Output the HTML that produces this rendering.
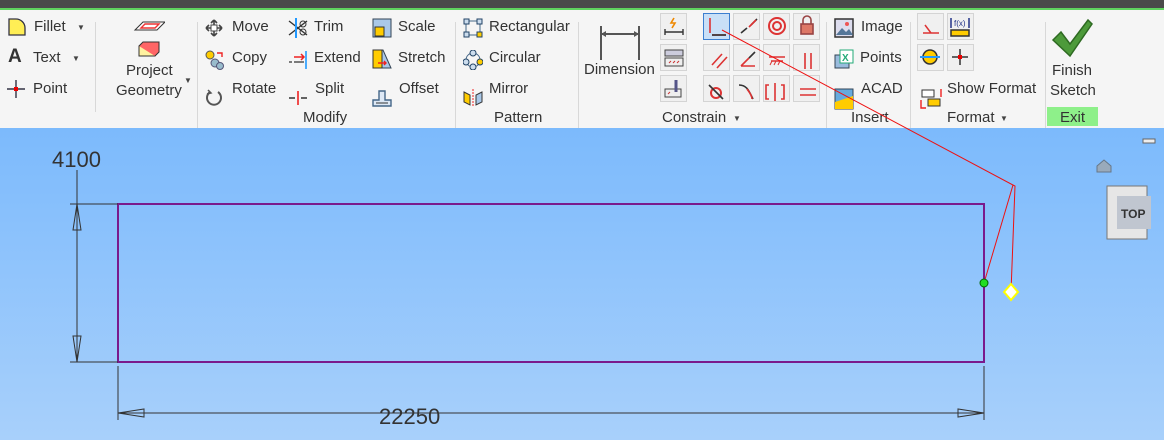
<!DOCTYPE html>
<html><head><meta charset="utf-8"><style>
*{margin:0;padding:0;box-sizing:border-box}
body{width:1164px;height:440px;overflow:hidden;position:relative;font-family:"Liberation Sans",sans-serif;background:#f5f5f5}
.top{position:absolute;left:0;top:0;width:1164px;height:8px;background:#4a4a4a}
.gl{position:absolute;left:0;top:8px;width:1164px;height:2px;background:#5fd35f}
.rib{position:absolute;left:0;top:10px;width:1164px;height:118px;background:#f5f5f5}
.t{position:absolute;font-size:15px;color:#333;white-space:nowrap;line-height:18px}
.sep{position:absolute;top:12px;width:1px;height:115px;background:#d8d8d8}
.ic{position:absolute}
.b{position:absolute;width:27px;height:27px;background:#f0f0f0;border:1px solid #d4d4d4}
.canvas{position:absolute;left:0;top:128px;width:1164px;height:312px;background:linear-gradient(#7cbafc,#a8d0fb)}
.ar{font-size:8px;position:absolute;color:#444}
</style></head><body>
<div class="top"></div><div class="gl"></div>
<div class="rib">
<!-- left group -->
<svg class="ic" style="left:8px;top:8px" width="18" height="18"><path d="M1 17V1h7a9 9 0 0 1 9 9v7z" fill="#ffee55" stroke="#334" stroke-width="1.3"/></svg>
<div class="t" style="left:34px;top:8px">Fillet</div><div class="ar" style="left:77px;top:13px">▼</div>
<div class="t" style="left:8px;top:38px;font-weight:bold;font-size:19px;color:#333">A</div>
<div class="t" style="left:33px;top:39px">Text</div><div class="ar" style="left:72px;top:44px">▼</div>
<svg class="ic" style="left:7px;top:70px" width="18" height="18"><path d="M0 9h7M11 9h7M9 0v7M9 11v7" stroke="#334" stroke-width="1.4"/><rect x="7" y="7" width="4" height="4" fill="#e00"/></svg>
<div class="t" style="left:33px;top:70px">Point</div>
<div class="sep" style="left:95px;top:12px;height:90px"></div>
<svg class="ic" style="left:133px;top:10px" width="32" height="38"><path d="M2 10l8-8h22l-8 8z" fill="#fff" stroke="#333"/><path d="M8 8l4-4h14l-4 4z" fill="none" stroke="#e33" stroke-width="1.4"/><rect x="6" y="26" width="16" height="10" fill="#fff2a0" stroke="#333"/><path d="M6 26l4-4h16v10l-4 4" fill="#f66" stroke="#333"/><path d="M10 22h16v10" fill="none" stroke="#333"/></svg>
<div class="t" style="left:126px;top:52px">Project</div>
<div class="t" style="left:116px;top:72px">Geometry</div><div class="ar" style="left:184px;top:66px">▼</div>
<div class="sep" style="left:197px"></div>
<!-- modify -->
<svg class="ic" style="left:205px;top:9px" width="18" height="18"><path d="M9 1v16M1 9h16M9 1l-3 3M9 1l3 3M9 17l-3-3M9 17l3-3M1 9l3-3M1 9l3 3M17 9l-3-3M17 9l-3 3" stroke="#444" stroke-width="1.6" fill="none"/><rect x="6" y="6" width="6" height="6" fill="#fff" stroke="#444"/></svg>
<div class="t" style="left:232px;top:8px">Move</div>
<svg class="ic" style="left:205px;top:40px" width="20" height="20"><circle cx="5" cy="5" r="4" fill="#fc0" stroke="#555"/><circle cx="10" cy="13" r="4" fill="#9bc" stroke="#557"/><circle cx="15" cy="16" r="3.5" fill="#9bc" stroke="#557"/><path d="M12 3h5v4" stroke="#e22" fill="none" stroke-width="1.4"/></svg>
<div class="t" style="left:232px;top:39px">Copy</div>
<svg class="ic" style="left:205px;top:79px" width="18" height="18"><path d="M13 3A7 7 0 1 1 5 3" stroke="#555" stroke-width="2" fill="none"/><path d="M3 1l3 3-4 1" stroke="#555" fill="none" stroke-width="1.5"/></svg>
<div class="t" style="left:232px;top:70px">Rotate</div>
<svg class="ic" style="left:288px;top:8px" width="20" height="20"><path d="M1 3l18 14M1 17L19 3" stroke="#333" stroke-width="1.4"/><circle cx="15" cy="14" r="3" fill="none" stroke="#333"/><circle cx="15" cy="6" r="3" fill="none" stroke="#333"/><path d="M8 0v20" stroke="#29f" stroke-width="2"/></svg>
<div class="t" style="left:314px;top:8px">Trim</div>
<svg class="ic" style="left:288px;top:41px" width="20" height="18"><path d="M1 11h3M6 11h10" stroke="#333" stroke-width="1.3"/><path d="M6 6h9M13 3l3 3-3 3" stroke="#e22" stroke-width="1.5" fill="none"/><path d="M18 0v18" stroke="#29f" stroke-width="1.6"/></svg>
<div class="t" style="left:314px;top:39px">Extend</div>
<svg class="ic" style="left:288px;top:80px" width="20" height="16"><path d="M1 8h6M13 8h6M5 4h0" stroke="#333" stroke-width="1.4"/><path d="M10 1v14" stroke="#e22" stroke-width="1.6"/></svg>
<div class="t" style="left:315px;top:70px">Split</div>
<svg class="ic" style="left:372px;top:8px" width="20" height="20"><rect x="1" y="1" width="18" height="18" fill="#aac8e8" stroke="#345"/><rect x="3" y="9" width="9" height="9" fill="#fc0" stroke="#333"/></svg>
<div class="t" style="left:398px;top:8px">Scale</div>
<svg class="ic" style="left:372px;top:39px" width="20" height="20"><path d="M1 1h10l8 18H1z" fill="#aac8e8" stroke="#345"/><rect x="1" y="1" width="9" height="18" fill="#fc0" stroke="#333"/><path d="M6 14h8M12 12l2 2-2 2" stroke="#e22" fill="none" stroke-width="1.4"/></svg>
<div class="t" style="left:398px;top:39px">Stretch</div>
<svg class="ic" style="left:372px;top:79px" width="20" height="18"><path d="M1 17V11h6V2h6v9h6v6z" fill="#dde8f5" stroke="#468" stroke-width="1.4"/><path d="M4 14h12" stroke="#333"/></svg>
<div class="t" style="left:399px;top:70px">Offset</div>
<div class="t" style="left:303px;top:99px">Modify</div>
<div class="sep" style="left:455px"></div>
<!-- pattern -->
<svg class="ic" style="left:463px;top:8px" width="20" height="20"><rect x="3" y="3" width="14" height="14" fill="none" stroke="#468"/><rect x="1" y="1" width="5" height="5" fill="#cde" stroke="#246"/><rect x="14" y="1" width="5" height="5" fill="#cde" stroke="#246"/><rect x="1" y="14" width="5" height="5" fill="#cde" stroke="#246"/><rect x="14" y="14" width="5" height="5" fill="#fc0" stroke="#246"/></svg>
<div class="t" style="left:489px;top:8px">Rectangular</div>
<svg class="ic" style="left:463px;top:40px" width="20" height="20"><circle cx="10" cy="10" r="7" fill="none" stroke="#468"/><circle cx="10" cy="3" r="3" fill="#cde" stroke="#246"/><circle cx="3" cy="12" r="3" fill="#cde" stroke="#246"/><circle cx="17" cy="12" r="3" fill="#fc0" stroke="#246"/><circle cx="10" cy="17" r="3" fill="#cde" stroke="#246"/></svg>
<div class="t" style="left:489px;top:39px">Circular</div>
<svg class="ic" style="left:463px;top:79px" width="20" height="18"><path d="M1 3l6 3v10l-6-3z" fill="#fc0" stroke="#333"/><path d="M19 3l-6 3v10l6-3z" fill="#aac8e8" stroke="#333"/><path d="M10 0v18" stroke="#e22" stroke-dasharray="2 1"/></svg>
<div class="t" style="left:489px;top:70px">Mirror</div>
<div class="t" style="left:494px;top:99px">Pattern</div>
<div class="sep" style="left:578px"></div>
<!-- constrain -->
<svg class="ic" style="left:599px;top:16px" width="42" height="34"><path d="M2 0v34M40 0v34M2 8h38" stroke="#555" stroke-width="2"/><path d="M2 8l5-3v6zM40 8l-5-3v6z" fill="#555"/></svg>
<div class="t" style="left:584px;top:51px">Dimension</div>
<div class="b" style="left:660px;top:3px"></div><div class="b" style="left:660px;top:34px"></div><div class="b" style="left:660px;top:65px"></div>
<svg class="ic" style="left:664px;top:7px" width="20" height="20"><path d="M10 1l-3 5h4l-3 5" stroke="#e80" fill="none" stroke-width="1.6"/><path d="M1 15h18M1 12v6M19 12v6" stroke="#333" stroke-width="1.4"/></svg>
<svg class="ic" style="left:664px;top:38px" width="20" height="20"><rect x="1" y="2" width="18" height="6" fill="#ccd" stroke="#444"/><rect x="1" y="10" width="18" height="8" fill="#eee" stroke="#444"/><path d="M5 15l2-2M9 15l2-2 M13 15l2-2" stroke="#c33"/></svg>
<svg class="ic" style="left:664px;top:69px" width="20" height="20"><rect x="1" y="10" width="16" height="8" fill="#eee" stroke="#444"/><path d="M12 1v12" stroke="#558" stroke-width="3"/><path d="M4 15l2-2" stroke="#c33"/></svg>
<div class="b" style="left:703px;top:3px;background:#c9e0f7;border-color:#3c7fd0"></div>
<div class="b" style="left:733px;top:3px"></div><div class="b" style="left:763px;top:3px"></div><div class="b" style="left:793px;top:3px"></div>
<div class="b" style="left:703px;top:34px"></div><div class="b" style="left:733px;top:34px"></div><div class="b" style="left:763px;top:34px"></div><div class="b" style="left:793px;top:34px"></div>
<div class="b" style="left:703px;top:65px"></div><div class="b" style="left:733px;top:65px"></div><div class="b" style="left:763px;top:65px"></div><div class="b" style="left:793px;top:65px"></div>
<svg class="ic" style="left:703px;top:3px" width="120" height="93" fill="none" stroke-width="1.6">
<path d="M7 5v15M9 22h14" stroke="#d33"/><path d="M9 22h14" stroke="#333"/>
<path d="M38 20l6-5M48 12l6-6" stroke="#333"/><path d="M46 14l7-7" stroke="#d33"/>
<circle cx="74" cy="13" r="8" stroke="#d33" stroke-width="2"/><circle cx="74" cy="13" r="4" stroke="#d33" stroke-width="2"/>
<rect x="98" y="11" width="12" height="10" fill="#d76" stroke="#944"/><path d="M100 11V7a4 4 0 0 1 8 0v4" stroke="#944"/>
<path d="M9 52l10-11M14 55l10-11" stroke="#d33"/>
<path d="M38 53l8-8M38 53h14" stroke="#d33"/><path d="M46 45l6-6" stroke="#333"/>
<path d="M66 44h16M68 48h12" stroke="#d33"/><path d="M69 48l-2 4M73 48l-2 4M77 48l-2 4" stroke="#d33" stroke-width="1"/>
<path d="M102 40v16M108 40v16" stroke="#d33"/>
<circle cx="13" cy="80" r="5" stroke="#d33" stroke-width="2"/><path d="M6 72l14 14" stroke="#333"/>
<path d="M36 72c8 0 10 6 14 14" stroke="#333"/><path d="M44 76c2 3 5 6 5 10" stroke="#d33"/>
<path d="M66 72h-3v14h3M78 72h3v14h-3M72 70v18" stroke="#d33"/>
<path d="M97 76h16M97 82h16" stroke="#d33"/>
</svg>
<div class="t" style="left:662px;top:99px">Constrain</div><div class="ar" style="left:733px;top:104px">▼</div>
<div class="sep" style="left:826px"></div>
<!-- insert -->
<svg class="ic" style="left:834px;top:8px" width="20" height="20"><rect x="1" y="1" width="18" height="18" fill="#dde" stroke="#333" stroke-width="1.5"/><path d="M2 17l6-7 4 4 3-3 4 6z" fill="#579"/><circle cx="13" cy="6" r="2" fill="#e55"/></svg>
<div class="t" style="left:861px;top:8px">Image</div>
<svg class="ic" style="left:834px;top:39px" width="20" height="20"><rect x="1" y="6" width="14" height="13" fill="#9bd" stroke="#345"/><rect x="6" y="1" width="13" height="13" fill="#fff" stroke="#2a7"/><text x="8" y="12" font-size="10" fill="#2a7" font-family="Liberation Sans" font-weight="bold">X</text></svg>
<div class="t" style="left:860px;top:39px">Points</div>
<svg class="ic" style="left:834px;top:78px" width="20" height="22"><rect x="1" y="1" width="18" height="20" fill="#6ad" stroke="#345"/><path d="M1 14l18-6v13H1z" fill="#fc0"/></svg>
<div class="t" style="left:861px;top:70px">ACAD</div>
<div class="t" style="left:851px;top:99px">Insert</div>
<div class="sep" style="left:910px"></div>
<!-- format -->
<div class="b" style="left:917px;top:3px"></div><div class="b" style="left:947px;top:3px"></div>
<div class="b" style="left:917px;top:34px"></div><div class="b" style="left:947px;top:34px"></div>
<svg class="ic" style="left:917px;top:3px" width="60" height="60" fill="none" stroke-width="1.5">
<path d="M6 20h16M8 12l6 8" stroke="#d33"/>
<path d="M34 5v10M52 5v10" stroke="#238"/><text x="37" y="13" font-size="8" fill="#238" font-family="Liberation Sans">f(x)</text><rect x="34" y="17" width="18" height="6" fill="#fc0" stroke="#333"/>
<circle cx="13" cy="44" r="7" fill="#fc0" stroke="#333"/><path d="M3 44h20" stroke="#29f" stroke-width="2"/>
<path d="M35 44h16M43 36v16" stroke="#333"/><rect x="41" y="42" width="4" height="4" fill="#e00" stroke="none"/>
</svg>
<svg class="ic" style="left:920px;top:78px" width="22" height="22"><rect x="2" y="2" width="12" height="7" fill="#fff" stroke="#333"/><rect x="8" y="11" width="12" height="7" fill="#fc0" stroke="#333"/><path d="M1 12v8h5M21 1v8" stroke="#e22" stroke-width="1.4" fill="none"/></svg>
<div class="t" style="left:947px;top:70px">Show Format</div>
<div class="t" style="left:947px;top:99px">Format</div><div class="ar" style="left:1000px;top:104px">▼</div>
<div class="sep" style="left:1045px"></div>
<!-- exit -->
<svg class="ic" style="left:1050px;top:6px" width="44" height="44"><path d="M3 24l8-8 9 12L38 4l4 4-22 32z" fill="#4d9a3a" stroke="#2e6a22" stroke-width="1.5"/></svg>
<div class="t" style="left:1052px;top:52px">Finish</div>
<div class="t" style="left:1050px;top:72px">Sketch</div>
<div style="position:absolute;left:1047px;top:97px;width:51px;height:19px;background:#8ef08a"></div>
<div class="t" style="left:1060px;top:99px">Exit</div>
</div>
<div class="canvas"></div>
<svg style="position:absolute;left:0;top:0" width="1164" height="440">
<rect x="118" y="204" width="866" height="158" fill="none" stroke="#7a1a8c" stroke-width="2"/>
<path d="M70 204h48M70 362h48M77 170v192" stroke="#333" stroke-width="1"/>
<path d="M77 204l-4 26h8zM77 362l-4-26h8z" fill="none" stroke="#333"/>
<path d="M118 366v54M984 366v54M118 413h866" stroke="#333" stroke-width="1"/>
<path d="M118 413l26-4v8zM984 413l-26-4v8z" fill="none" stroke="#333"/>
<text x="52" y="167" font-size="22" fill="#333" font-family="Liberation Sans">4100</text>
<text x="379" y="424" font-size="22" fill="#333" font-family="Liberation Sans">22250</text>
<path d="M722 30L1013 185L984 283M1013 185L1015 186L1011 292" stroke="#e11" fill="none" stroke-width="1"/>
<circle cx="984" cy="283" r="4" fill="#2d2" stroke="#060"/>
<path d="M1011 284l7 8-7 8-7-8z" fill="#fff" stroke="#ff0" stroke-width="2"/>
<path d="M1097 166l7-6 7 6v6h-14z" fill="#9ab" stroke="#678"/>
<rect x="1143" y="139" width="12" height="4" fill="#eee" stroke="#666"/>
<rect x="1107" y="186" width="40" height="53" fill="#e6e6e6" stroke="#777"/>
<rect x="1117" y="196" width="34" height="33" fill="#c0c6d0"/>
<text x="1121" y="218" font-size="12" font-weight="bold" fill="#333" font-family="Liberation Sans">TOP</text>
</svg>
</body></html>
